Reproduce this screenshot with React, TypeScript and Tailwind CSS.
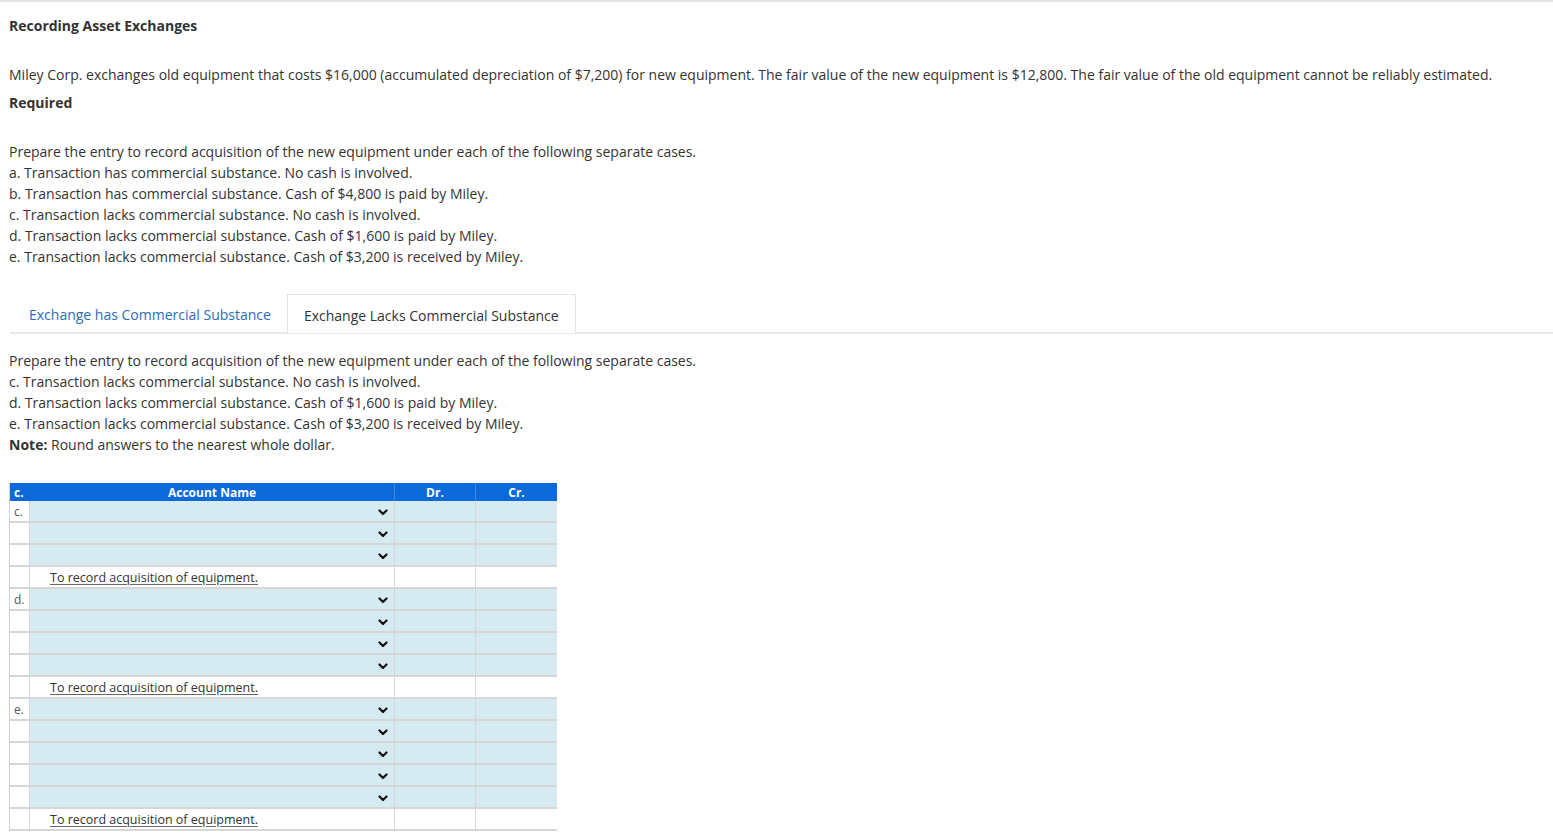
import React from "react";

const font = { fontFamily: '"Open Sans", "Liberation Sans", sans-serif' };

function Chevron() {
  return (
    <svg width="10" height="7" viewBox="0 0 10 7" className="shrink-0">
      <polyline points="1.5,1.5 5,5 8.5,1.5" fill="none" stroke="#111" strokeWidth="2.2" strokeLinecap="round" strokeLinejoin="round" />
    </svg>
  );
}

function InputRow({ label }: { label?: string }) {
  return (
    <>
      <div className="h-[22px] border-b-2 border-r border-[#d6d6d6] bg-white pl-[4px] text-[12px] leading-[22px] text-[#555]">{label}</div>
      <div className="h-[22px] border-b-2 border-r border-[#d6d6d6] bg-[#d5eaf1] flex items-center justify-end pr-[6px] pt-[2px]">
        <Chevron />
      </div>
      <div className="h-[22px] border-b-2 border-r border-[#d6d6d6] bg-[#d5eaf1]" />
      <div className="h-[22px] border-b-2 border-[#d6d6d6] bg-[#d5eaf1]" />
    </>
  );
}

function MemoRow() {
  return (
    <>
      <div className="h-[22px] border-b-2 border-r border-[#d6d6d6] bg-white" />
      <div className="h-[22px] border-b-2 border-r border-[#d6d6d6] bg-white pl-[20px] text-[12.5px] leading-[22px] text-[#333]">
        <span className="underline decoration-[#666] underline-offset-2">To record acquisition of equipment.</span>
      </div>
      <div className="h-[22px] border-b-2 border-r border-[#d6d6d6] bg-white" />
      <div className="h-[22px] border-b-2 border-[#d6d6d6] bg-white" />
    </>
  );
}

export default function App() {
  const cases = [
    { label: "c.", rows: 3 },
    { label: "d.", rows: 4 },
    { label: "e.", rows: 5 },
  ];

  return (
    <div style={font} className="min-h-screen bg-white text-[14px] leading-[21px] text-[#333] border-t-2 border-[#e4e4e4]">
      <div className="pl-[9px] pt-[13px]">
        <h1 className="font-bold text-[14px] leading-[21px] text-[#333]">Recording Asset Exchanges</h1>
        <p className="mt-[28px]">
          Miley Corp. exchanges old equipment that costs $16,000 (accumulated depreciation of $7,200) for new equipment. The fair value of the new equipment is $12,800. The fair value of the old equipment cannot be reliably estimated.
        </p>
        <p className="mt-[7px] font-bold">Required</p>
        <div className="mt-[28px]">
          <p>Prepare the entry to record acquisition of the new equipment under each of the following separate cases.</p>
          <p>a. Transaction has commercial substance. No cash is involved.</p>
          <p>b. Transaction has commercial substance. Cash of $4,800 is paid by Miley.</p>
          <p>c. Transaction lacks commercial substance. No cash is involved.</p>
          <p>d. Transaction lacks commercial substance. Cash of $1,600 is paid by Miley.</p>
          <p>e. Transaction lacks commercial substance. Cash of $3,200 is received by Miley.</p>
        </div>
      </div>

      <div className="ml-[10px] mt-[27px] flex border-b-2 border-[#e8e8e8]">
        <div className="h-[38px] pl-[19px] pr-[16px] flex items-center pt-[2px] text-[#2a6db8]">Exchange has Commercial Substance</div>
        <div className="h-[39px] -mb-[2px] px-[16px] flex items-center pt-[2px] border border-b-0 border-[#e3e3e3] bg-white text-[#333]">
          Exchange Lacks Commercial Substance
        </div>
      </div>

      <div className="pl-[9px] pt-[16px]">
        <p>Prepare the entry to record acquisition of the new equipment under each of the following separate cases.</p>
        <p>c. Transaction lacks commercial substance. No cash is involved.</p>
        <p>d. Transaction lacks commercial substance. Cash of $1,600 is paid by Miley.</p>
        <p>e. Transaction lacks commercial substance. Cash of $3,200 is received by Miley.</p>
        <p>
          <span className="font-bold">Note:</span> Round answers to the nearest whole dollar.
        </p>

        <div className="mt-[28px] w-[548px] grid grid-cols-[20px_365px_81px_81px] border-l border-r border-[#d0d0d0]">
          <div className="h-[18px] bg-[#0b69d9] text-white font-bold text-[12px] leading-[19px] pl-[4px]">c.</div>
          <div className="h-[18px] bg-[#0b69d9] text-white font-bold text-[12px] leading-[19px] text-center border-r border-[#3f86de]">Account Name</div>
          <div className="h-[18px] bg-[#0b69d9] text-white font-bold text-[12px] leading-[19px] text-center border-r border-[#3f86de]">Dr.</div>
          <div className="h-[18px] bg-[#0b69d9] text-white font-bold text-[12px] leading-[19px] text-center">Cr.</div>
          {cases.map((c) => (
            <React.Fragment key={c.label}>
              {Array.from({ length: c.rows }).map((_, i) => (
                <InputRow key={i} label={i === 0 ? c.label : undefined} />
              ))}
              <MemoRow />
            </React.Fragment>
          ))}
        </div>
      </div>
    </div>
  );
}
